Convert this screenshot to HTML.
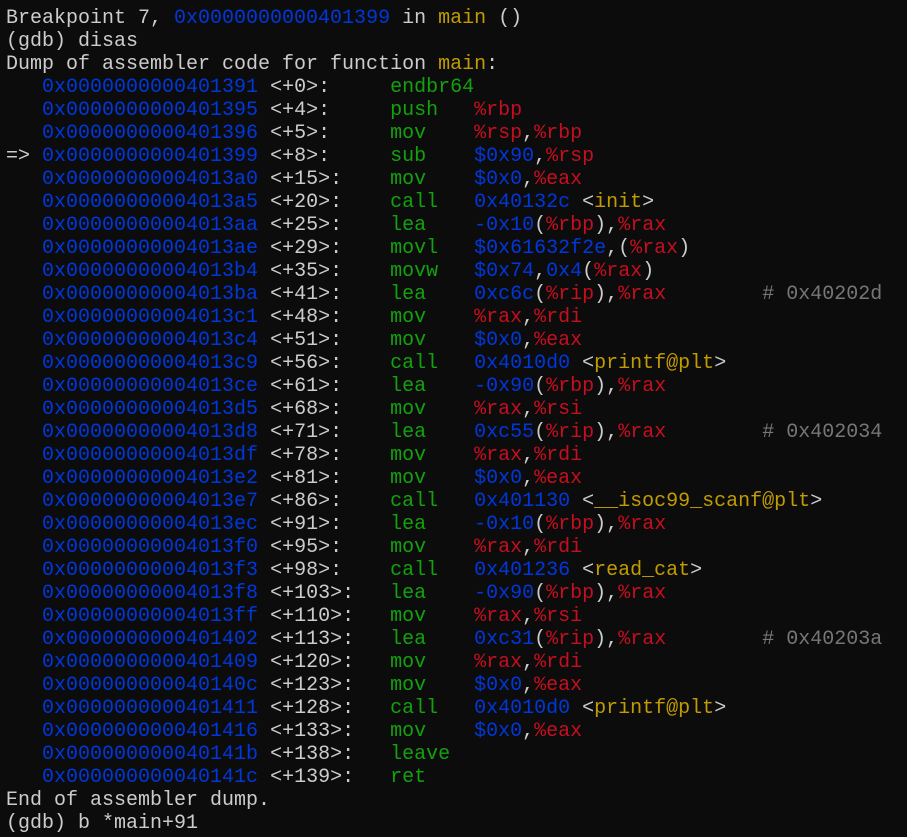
<!DOCTYPE html>
<html><head><meta charset="utf-8"><style>
html,body{margin:0;padding:0;background:#0c0c0c;width:907px;height:837px;overflow:hidden}
pre{margin:0;padding:7px 0 0 6px;font-family:"Liberation Mono",monospace;font-size:20px;line-height:23px;color:#cccccc}
.b{color:#0037da}.g{color:#13a10e}.r{color:#c50f1f}.y{color:#c19c00}.c{color:#767676}
</style></head><body><pre>Breakpoint 7, <span class="b">0x0000000000401399</span> in <span class="y">main</span> ()
(gdb) disas
Dump of assembler code for function <span class="y">main</span>:
   <span class="b">0x0000000000401391</span> &lt;+0&gt;:     <span class="g">endbr64</span>
   <span class="b">0x0000000000401395</span> &lt;+4&gt;:     <span class="g">push</span>   <span class="r">%rbp</span>
   <span class="b">0x0000000000401396</span> &lt;+5&gt;:     <span class="g">mov</span>    <span class="r">%rsp</span>,<span class="r">%rbp</span>
=&gt; <span class="b">0x0000000000401399</span> &lt;+8&gt;:     <span class="g">sub</span>    <span class="b">$0x90</span>,<span class="r">%rsp</span>
   <span class="b">0x00000000004013a0</span> &lt;+15&gt;:    <span class="g">mov</span>    <span class="b">$0x0</span>,<span class="r">%eax</span>
   <span class="b">0x00000000004013a5</span> &lt;+20&gt;:    <span class="g">call</span>   <span class="b">0x40132c</span> &lt;<span class="y">init</span>&gt;
   <span class="b">0x00000000004013aa</span> &lt;+25&gt;:    <span class="g">lea</span>    <span class="b">-0x10</span>(<span class="r">%rbp</span>),<span class="r">%rax</span>
   <span class="b">0x00000000004013ae</span> &lt;+29&gt;:    <span class="g">movl</span>   <span class="b">$0x61632f2e</span>,(<span class="r">%rax</span>)
   <span class="b">0x00000000004013b4</span> &lt;+35&gt;:    <span class="g">movw</span>   <span class="b">$0x74</span>,<span class="b">0x4</span>(<span class="r">%rax</span>)
   <span class="b">0x00000000004013ba</span> &lt;+41&gt;:    <span class="g">lea</span>    <span class="b">0xc6c</span>(<span class="r">%rip</span>),<span class="r">%rax</span>        <span class="c"># 0x40202d</span>
   <span class="b">0x00000000004013c1</span> &lt;+48&gt;:    <span class="g">mov</span>    <span class="r">%rax</span>,<span class="r">%rdi</span>
   <span class="b">0x00000000004013c4</span> &lt;+51&gt;:    <span class="g">mov</span>    <span class="b">$0x0</span>,<span class="r">%eax</span>
   <span class="b">0x00000000004013c9</span> &lt;+56&gt;:    <span class="g">call</span>   <span class="b">0x4010d0</span> &lt;<span class="y">printf@plt</span>&gt;
   <span class="b">0x00000000004013ce</span> &lt;+61&gt;:    <span class="g">lea</span>    <span class="b">-0x90</span>(<span class="r">%rbp</span>),<span class="r">%rax</span>
   <span class="b">0x00000000004013d5</span> &lt;+68&gt;:    <span class="g">mov</span>    <span class="r">%rax</span>,<span class="r">%rsi</span>
   <span class="b">0x00000000004013d8</span> &lt;+71&gt;:    <span class="g">lea</span>    <span class="b">0xc55</span>(<span class="r">%rip</span>),<span class="r">%rax</span>        <span class="c"># 0x402034</span>
   <span class="b">0x00000000004013df</span> &lt;+78&gt;:    <span class="g">mov</span>    <span class="r">%rax</span>,<span class="r">%rdi</span>
   <span class="b">0x00000000004013e2</span> &lt;+81&gt;:    <span class="g">mov</span>    <span class="b">$0x0</span>,<span class="r">%eax</span>
   <span class="b">0x00000000004013e7</span> &lt;+86&gt;:    <span class="g">call</span>   <span class="b">0x401130</span> &lt;<span class="y">__isoc99_scanf@plt</span>&gt;
   <span class="b">0x00000000004013ec</span> &lt;+91&gt;:    <span class="g">lea</span>    <span class="b">-0x10</span>(<span class="r">%rbp</span>),<span class="r">%rax</span>
   <span class="b">0x00000000004013f0</span> &lt;+95&gt;:    <span class="g">mov</span>    <span class="r">%rax</span>,<span class="r">%rdi</span>
   <span class="b">0x00000000004013f3</span> &lt;+98&gt;:    <span class="g">call</span>   <span class="b">0x401236</span> &lt;<span class="y">read_cat</span>&gt;
   <span class="b">0x00000000004013f8</span> &lt;+103&gt;:   <span class="g">lea</span>    <span class="b">-0x90</span>(<span class="r">%rbp</span>),<span class="r">%rax</span>
   <span class="b">0x00000000004013ff</span> &lt;+110&gt;:   <span class="g">mov</span>    <span class="r">%rax</span>,<span class="r">%rsi</span>
   <span class="b">0x0000000000401402</span> &lt;+113&gt;:   <span class="g">lea</span>    <span class="b">0xc31</span>(<span class="r">%rip</span>),<span class="r">%rax</span>        <span class="c"># 0x40203a</span>
   <span class="b">0x0000000000401409</span> &lt;+120&gt;:   <span class="g">mov</span>    <span class="r">%rax</span>,<span class="r">%rdi</span>
   <span class="b">0x000000000040140c</span> &lt;+123&gt;:   <span class="g">mov</span>    <span class="b">$0x0</span>,<span class="r">%eax</span>
   <span class="b">0x0000000000401411</span> &lt;+128&gt;:   <span class="g">call</span>   <span class="b">0x4010d0</span> &lt;<span class="y">printf@plt</span>&gt;
   <span class="b">0x0000000000401416</span> &lt;+133&gt;:   <span class="g">mov</span>    <span class="b">$0x0</span>,<span class="r">%eax</span>
   <span class="b">0x000000000040141b</span> &lt;+138&gt;:   <span class="g">leave</span>
   <span class="b">0x000000000040141c</span> &lt;+139&gt;:   <span class="g">ret</span>
End of assembler dump.
(gdb) b *main+91</pre></body></html>
